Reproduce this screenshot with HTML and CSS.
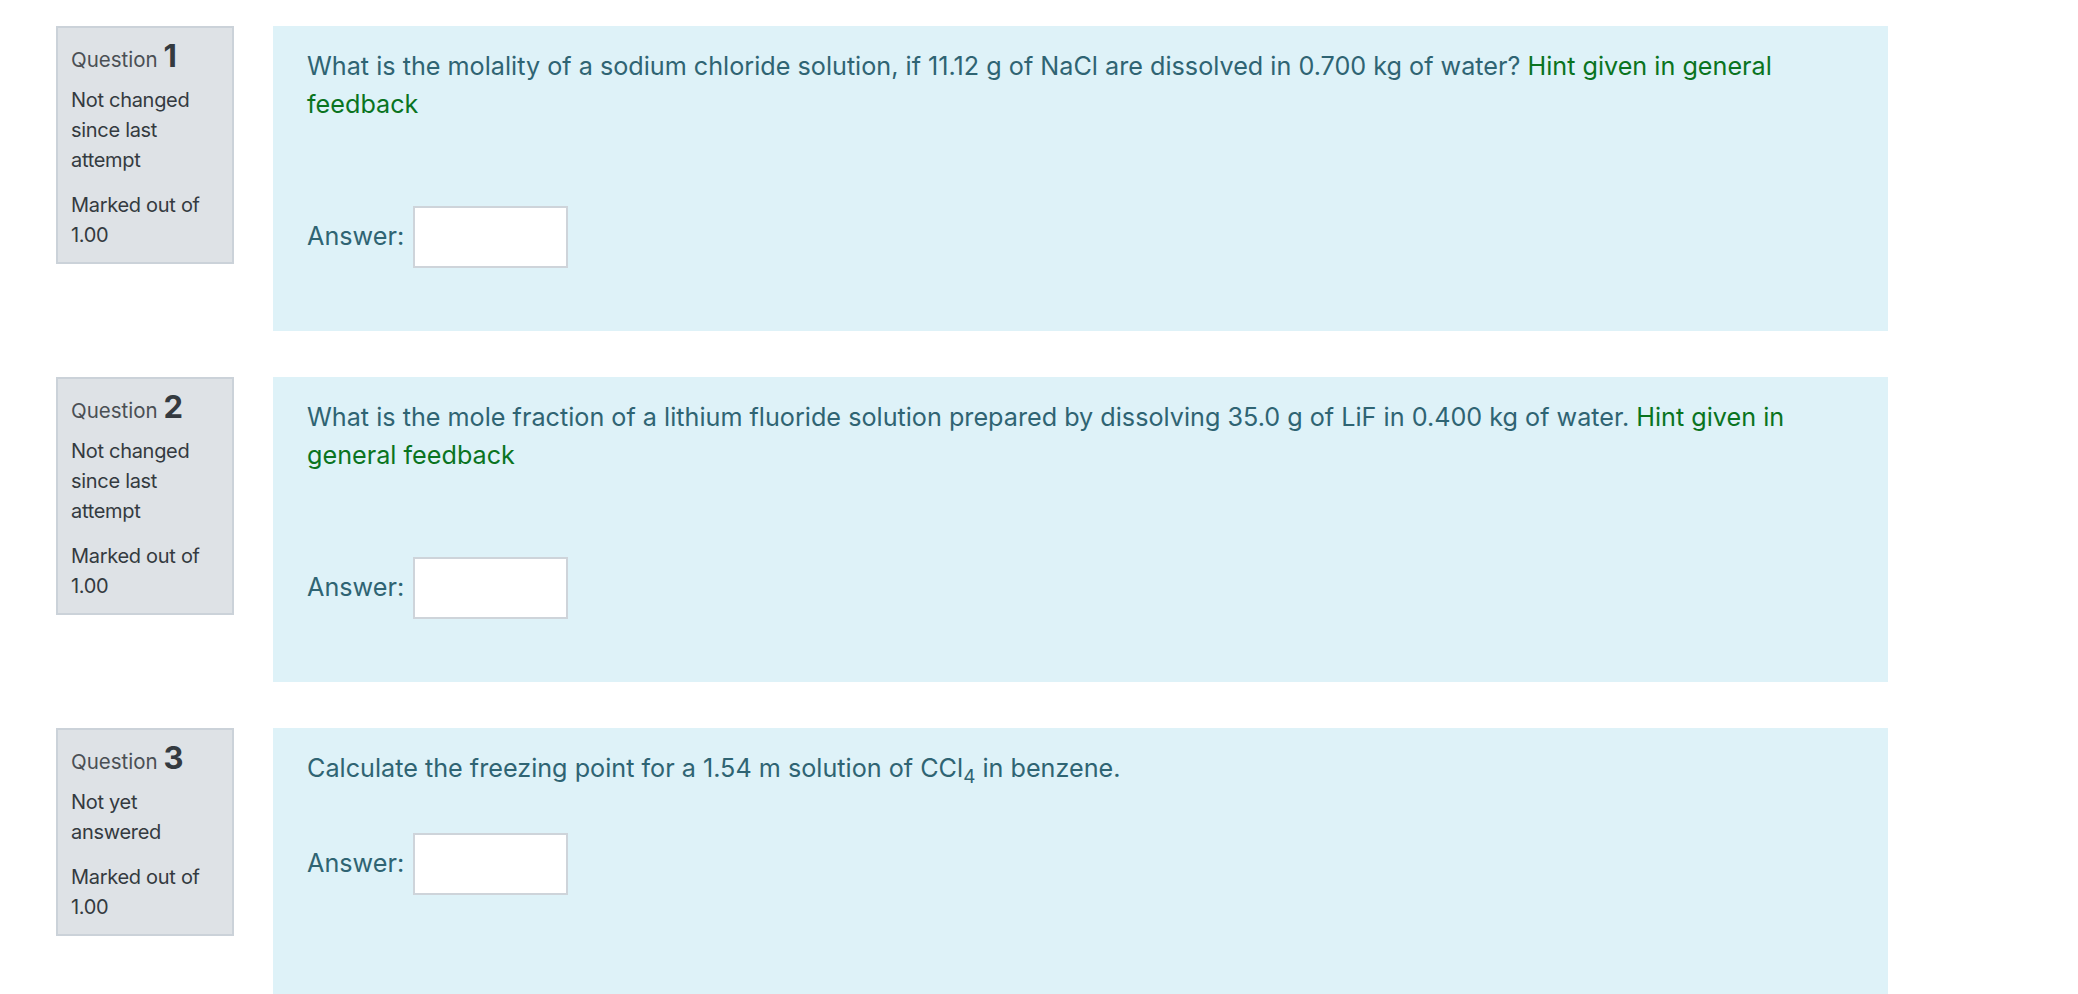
FILE: index.html
```html
<!DOCTYPE html>
<html lang="en">
<head>
  <meta charset="UTF-8" />
  <title>Quiz attempt</title>
  <link rel="stylesheet" href="styles.css">
</head>
<body>
  <div class="quiz">

    <div class="que">
      <div class="info">
        <h3 class="no">Question <span class="qno">1</span></h3>
        <div class="state">Not changed since last attempt</div>
        <div class="grade">Marked out of 1.00</div>
      </div>
      <div class="content">
        <div class="qtext">
          <p>What is the molality of a sodium chloride solution, if 11.12 g of NaCl are dissolved in 0.700 kg of water? <span class="hint">Hint given in general feedback</span></p>
          <p><br></p>
        </div>
        <div class="ablock">
          <label for="q1">Answer:</label>
          <input type="text" id="q1" class="answer">
        </div>
      </div>
    </div>

    <div class="que">
      <div class="info">
        <h3 class="no">Question <span class="qno">2</span></h3>
        <div class="state">Not changed since last attempt</div>
        <div class="grade">Marked out of 1.00</div>
      </div>
      <div class="content">
        <div class="qtext">
          <p>What is the mole fraction of a lithium fluoride solution prepared by dissolving 35.0 g of LiF in 0.400 kg of water. <span class="hint">Hint given in general feedback</span></p>
          <p><br></p>
        </div>
        <div class="ablock">
          <label for="q2">Answer:</label>
          <input type="text" id="q2" class="answer">
        </div>
      </div>
    </div>

    <div class="que">
      <div class="info">
        <h3 class="no">Question <span class="qno">3</span></h3>
        <div class="state">Not yet answered</div>
        <div class="grade">Marked out of 1.00</div>
      </div>
      <div class="content">
        <div class="qtext">
          <p>Calculate the freezing point for a 1.54 m solution of CCl<sub>4</sub> in benzene.</p>
        </div>
        <div class="ablock">
          <label for="q3">Answer:</label>
          <input type="text" id="q3" class="answer">
        </div>
      </div>
    </div>

  </div>
</body>
</html>
```

FILE: styles.css
```css
body {
  margin: 0;
  background: #fff;
  font-family: Inter, "Noto Sans", sans-serif;
  color: #343a40;
}
.quiz {
  padding: 26px 0 0 56px;
}
.que {
  display: flex;
  align-items: flex-start;
  gap: 39px;
  margin-bottom: 46px;
}
.info {
  box-sizing: border-box;
  width: 178px;
  flex-shrink: 0;
  padding: 12px 13px;
  background: #dee2e6;
  border: 2px solid #cbd2d9;
  font-size: 20px;
  letter-spacing: -0.3px;
  line-height: 30px;
}
.no {
  margin: 0 0 5px;
  font-size: 20.5px;
  font-weight: normal;
  letter-spacing: 0;
  line-height: 40px;
  color: #4a4f54;
}
.qno {
  font-size: 31px;
  font-weight: bold;
  line-height: 1;
  color: #343a40;
}
.grade {
  margin-top: 15px;
}
.content {
  box-sizing: border-box;
  width: 1615px;
  min-height: 305px;
  padding: 22px 34px 63px;
  background: #def2f8;
  color: #2f6473;
  font-size: 25.2px;
  line-height: 37.5px;
}
.qtext {
  margin-bottom: 45px;
}
.qtext p {
  margin: 0;
}
.qtext sub {
  font-size: 0.75em;
  line-height: 0;
}
.hint {
  color: #0a741f;
}
.ablock {
  display: flex;
  align-items: center;
  gap: 9px;
}
.answer {
  box-sizing: border-box;
  width: 155px;
  height: 62px;
  border: 2px solid #ced4da;
  background: #fff;
  font: inherit;
  padding: 0 10px;
}
```
